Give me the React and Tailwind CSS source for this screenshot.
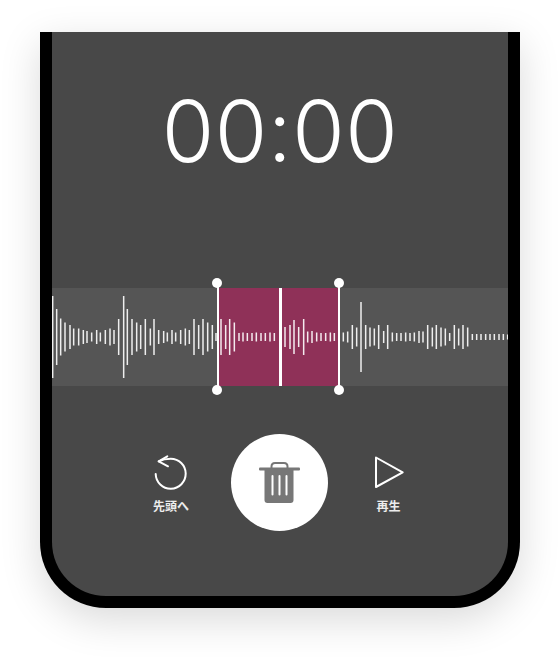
const leftBars = [
  [38, 82], [50, 56], [62, 37], [75, 29], [90, 24], [101, 17], [116, 17], [130, 14], [141, 12], [155, 9],
  [170, 14], [181, 9], [196, 14], [210, 17], [222, 14], [236, 36], [251, 82], [262, 56], [276, 36], [290, 29],
  [302, 24], [316, 36], [331, 17], [342, 36], [356, 14], [371, 12], [382, 9], [396, 14], [407, 9], [422, 14],
  [436, 17], [448, 14], [462, 36], [476, 24], [489, 36], [503, 29], [517, 24], [528, 8], [543, 36], [557, 24],
  [569, 36], [583, 29], [597, 8], [609, 9], [622, 8], [636, 8], [649, 9], [663, 8], [676, 8], [690, 9], [703, 8],
];

const rightBars = [
  [15, 20], [30, 24], [42, 34], [56, 20], [71, 36], [83, 11], [96, 12], [110, 9], [123, 8], [137, 8],
  [151, 9], [163, 8], [190, 9], [203, 11], [217, 24], [230, 19], [243, 70], [257, 24], [270, 19], [283, 17],
  [296, 24], [311, 12], [323, 24], [337, 9], [350, 8], [363, 8], [377, 9], [390, 8], [403, 9], [417, 12],
  [429, 11], [443, 24], [457, 19], [469, 24], [483, 19], [496, 17], [509, 8], [523, 24], [536, 17], [549, 24],
  [563, 19], [577, 6], [590, 6], [603, 6], [617, 6], [630, 6], [643, 6], [657, 6], [670, 6], [683, 5],
];

// positions were read off a 3x crop, so convert back to band pixels
const bars = [
  ...leftBars.map(([x, h]) => ({ x: 40 + x / 3 - 52, h })),
  ...rightBars.map(([x, h]) => ({ x: 280 + x / 3 - 52, h })),
];

const Waveform = () => (
  <svg className="absolute inset-0" width="456" height="98" viewBox="0 0 456 98">
    {bars.map((bar, i) => (
      <rect
        key={i}
        x={bar.x - 0.75}
        y={49 - bar.h / 2}
        width="1.5"
        height={bar.h}
        fill="#fff"
        fillOpacity="0.9"
      />
    ))}
  </svg>
);

const Handle = ({ className }) => (
  <div className={`absolute w-[10px] h-[10px] rounded-full bg-white ${className}`} />
);

const RestartIcon = () => (
  <svg width="40" height="40" viewBox="0 0 40 40" fill="none" stroke="#fff" strokeWidth="2" strokeLinecap="round" strokeLinejoin="round">
    <path d="M7.7 7.3Q13 4.7 19.7 4.7A15 15 0 1 1 4.7 20" />
    <path d="M16.3 2.3L7.7 7.3L17 12.3" />
  </svg>
);

const PlayIcon = () => (
  <svg width="40" height="40" viewBox="0 0 40 40" fill="none" stroke="#fff" strokeWidth="2" strokeLinejoin="round">
    <path d="M7 3.5L33.7 18.3L7 33Z" />
  </svg>
);

const TrashIcon = () => (
  <svg width="41" height="41" viewBox="0 0 41 41">
    <path d="M12.5 6.5V4.5Q12.5 1 16 1H25Q28.5 1 28.5 4.5V6.5" fill="none" stroke="#777" strokeWidth="2" />
    <rect x="0" y="5.6" width="41" height="2.8" rx="1" fill="#777" />
    <path d="M5.5 8H34.5V38Q34.5 41 31.5 41H8.5Q5.5 41 5.5 38Z" fill="#777" />
    <rect x="12.5" y="13" width="2" height="20.5" rx="1" fill="#fff" />
    <rect x="19.5" y="13" width="2" height="20.5" rx="1" fill="#fff" />
    <rect x="26.5" y="13" width="2" height="20.5" rx="1" fill="#fff" />
  </svg>
);

const labelFont = "text-[12px] leading-[14px] font-bold text-white/90 font-['Noto_Sans_CJK_JP',sans-serif]";

const App = () => {
  return (
    <div className="w-[560px] h-[657px] bg-white overflow-hidden pt-[32px] px-[40px]">
      <div className="w-[480px] h-[576px] bg-black px-3 pb-3 rounded-b-[66px] shadow-[0_12px_40px_rgba(0,0,0,0.15)]">
        <div className="h-full bg-[#484848] rounded-b-[54px]">
          <div className="h-[198px] flex items-center justify-center text-white text-[85px] leading-none tracking-[0.5px] font-[350] font-['Inter',sans-serif]">
            00:00
          </div>

          <div className="relative mt-[58px] h-[98px] flex bg-[#555555]">
            <div className="w-[165.5px]" />
            <div className="w-[121px] bg-[#8f3158]" />
            <Waveform />
            {/* trim handles and playhead sit on top of the bars */}
            <div className="absolute left-[164.5px] top-[-5px] bottom-[-5px] w-[2px] bg-white" />
            <div className="absolute left-[286px] top-[-5px] bottom-[-5px] w-[2px] bg-white" />
            <div className="absolute left-[227.2px] top-0 bottom-0 w-[2.4px] bg-white" />
            <Handle className="left-[160.3px] top-[-10px]" />
            <Handle className="left-[160.3px] bottom-[-9px]" />
            <Handle className="left-[281.7px] top-[-10px]" />
            <Handle className="left-[281.7px] bottom-[-9px]" />
          </div>

          <div className="mt-[48px] flex justify-center gap-[30px]">
            <button className="w-[60px] pt-[20px] flex flex-col items-center">
              <RestartIcon />
              <span className={`mt-[5px] ${labelFont}`}>先頭へ</span>
            </button>
            <button className="w-[97px] h-[97px] rounded-full bg-white flex items-center justify-center">
              <TrashIcon />
            </button>
            <button className="w-[61px] pt-[20px] flex flex-col items-center">
              <PlayIcon />
              <span className={`mt-[5px] ${labelFont}`}>再生</span>
            </button>
          </div>
        </div>
      </div>
    </div>
  );
};

export default App;
